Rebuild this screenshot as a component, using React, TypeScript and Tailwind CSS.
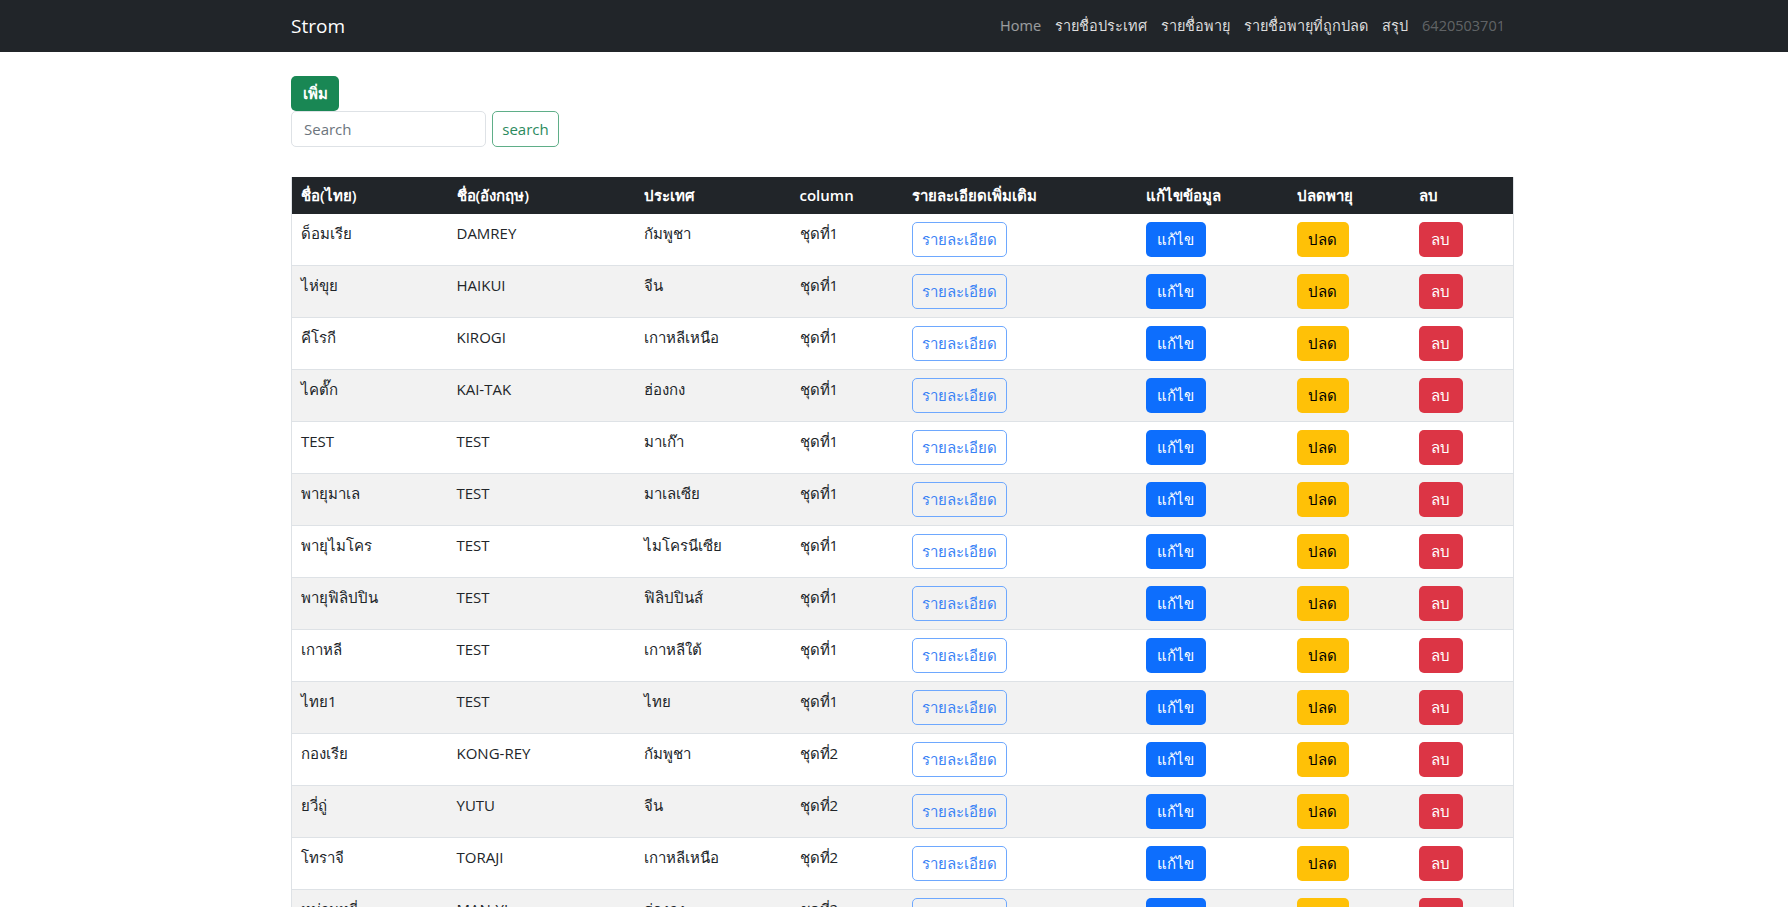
import React from "react";

type Storm = { th: string; en: string; country: string; set: string };

const storms: Storm[] = [
  { th: "ด็อมเรีย", en: "DAMREY", country: "กัมพูชา", set: "ชุดที่1" },
  { th: "ไห่ขุย", en: "HAIKUI", country: "จีน", set: "ชุดที่1" },
  { th: "คีโรกี", en: "KIROGI", country: "เกาหลีเหนือ", set: "ชุดที่1" },
  { th: "ไคตั๊ก", en: "KAI-TAK", country: "ฮ่องกง", set: "ชุดที่1" },
  { th: "TEST", en: "TEST", country: "มาเก๊า", set: "ชุดที่1" },
  { th: "พายุมาเล", en: "TEST", country: "มาเลเซีย", set: "ชุดที่1" },
  { th: "พายุไมโคร", en: "TEST", country: "ไมโครนีเซีย", set: "ชุดที่1" },
  { th: "พายุฟิลิปปิน", en: "TEST", country: "ฟิลิปปินส์", set: "ชุดที่1" },
  { th: "เกาหลี", en: "TEST", country: "เกาหลีใต้", set: "ชุดที่1" },
  { th: "ไทย1", en: "TEST", country: "ไทย", set: "ชุดที่1" },
  { th: "กองเรีย", en: "KONG-REY", country: "กัมพูชา", set: "ชุดที่2" },
  { th: "ยวี่ถู่", en: "YUTU", country: "จีน", set: "ชุดที่2" },
  { th: "โทราจี", en: "TORAJI", country: "เกาหลีเหนือ", set: "ชุดที่2" },
  { th: "หม่านหยี่", en: "MAN-YI", country: "ฮ่องกง", set: "ชุดที่2" },
];

const navLinks = ["รายชื่อประเทศ", "รายชื่อพายุ", "รายชื่อพายุที่ถูกปลด", "สรุป"];

const headers = [
  { label: "ชื่อ(ไทย)", w: "w-[156px]" },
  { label: "ชื่อ(อังกฤษ)", w: "w-[187px]" },
  { label: "ประเทศ", w: "w-[156px]" },
  { label: "column", w: "w-[112px]" },
  { label: "รายละเอียดเพิ่มเติม", w: "w-[234px]" },
  { label: "แก้ไขข้อมูล", w: "w-[151px]" },
  { label: "ปลดพายุ", w: "w-[122px]" },
  { label: "ลบ", w: "w-[104px]" },
];

const btn = "inline-flex h-[35px] items-center justify-center whitespace-nowrap rounded-[5px] text-[15px] leading-none";

export default function App() {
  return (
    <div className="min-h-screen bg-white text-[15px] text-[#212529]" style={{ fontFamily: '"Open Sans", "Noto Sans", sans-serif' }}>
      <nav className="h-[52px] bg-[#212529]">
        <div className="ml-[291px] flex h-full w-[1222px] items-center justify-between">
          <span className="text-[19px] text-white">Strom</span>
          <ul className="flex items-center text-[14.5px]">
            <li className="px-[7px] text-white/55">Home</li>
            {navLinks.map((l) => (
              <li key={l} className="px-[7px] font-medium text-[#dcdcdc]">
                {l}
              </li>
            ))}
            <li className="pl-[7px] pr-[8px] text-white/30">6420503701</li>
          </ul>
        </div>
      </nav>

      <main className="ml-[291px] w-[1222px] pt-[24px]">
        <button className="h-[35px] w-[48px] rounded-[5px] bg-[#198754] text-[15px] font-semibold text-white">
          เพิ่ม
        </button>
        <div className="flex items-center gap-[6px]">
          <input
            placeholder="Search"
            className="h-[36px] w-[195px] rounded-[5px] border border-[#dee2e6] px-3 text-[15px] placeholder:text-[#6c757d] outline-none"
          />
          <button className="h-[36px] w-[67px] rounded-[5px] border border-[#5fae88] text-[15px] text-[#2b8a5d]">
            search
          </button>
        </div>

        <table className="mt-[30px] w-[1222px] table-fixed border-collapse border-x border-[#dee2e6] text-left">
          <thead>
            <tr className="h-[37px] bg-[#212529] text-white">
              {headers.map((h) => (
                <th key={h.label} className={`${h.w} px-[9px] text-[15px] font-semibold`}>
                  {h.label}
                </th>
              ))}
            </tr>
          </thead>
          <tbody>
            {storms.map((s, i) => (
              <tr key={i} className={`border-b border-[#dee2e6] ${i % 2 === 1 ? "bg-[#f2f2f2]" : "bg-white"}`}>
                <td className="h-[51px] px-[9px] pt-[7px] align-top leading-[24px]">{s.th}</td>
                <td className="px-[9px] pt-[7px] align-top leading-[24px]">{s.en}</td>
                <td className="px-[9px] pt-[7px] align-top leading-[24px]">{s.country}</td>
                <td className="px-[9px] pt-[7px] align-top leading-[24px]">{s.set}</td>
                <td className="px-[9px] py-[8px] align-top leading-none">
                  <button className={`${btn} w-[95px] border border-[#6ea8fe] text-[#3a82f5]`}>รายละเอียด</button>
                </td>
                <td className="px-[9px] py-[8px] align-top leading-none">
                  <button className={`${btn} w-[60px] bg-[#0d6efd] text-white`}>แก้ไข</button>
                </td>
                <td className="px-[9px] py-[8px] align-top leading-none">
                  <button className={`${btn} w-[52px] bg-[#ffc107] text-black`}>ปลด</button>
                </td>
                <td className="px-[9px] py-[8px] align-top leading-none">
                  <button className={`${btn} w-[44px] bg-[#dc3545] text-white`}>ลบ</button>
                </td>
              </tr>
            ))}
          </tbody>
        </table>
      </main>
    </div>
  );
}
